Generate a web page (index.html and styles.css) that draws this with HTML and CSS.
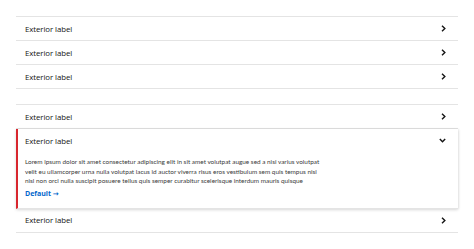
FILE: index.html
```html
<!DOCTYPE html>
<html lang="en">
<head>
<meta charset="utf-8">
<link rel="stylesheet" href="styles.css">
</head>
<body>
<div class="page">
  <div class="accordion">
    <div class="item"><span class="label">Exterior label</span><svg class="chev" viewBox="0 0 6 8"><path d="M1.2 0.8 L4.6 4 L1.2 7.2" /></svg></div>
    <div class="item"><span class="label">Exterior label</span><svg class="chev" viewBox="0 0 6 8"><path d="M1.2 0.8 L4.6 4 L1.2 7.2" /></svg></div>
    <div class="item"><span class="label">Exterior label</span><svg class="chev" viewBox="0 0 6 8"><path d="M1.2 0.8 L4.6 4 L1.2 7.2" /></svg></div>
  </div>
  <div class="accordion">
    <div class="item"><span class="label">Exterior label</span><svg class="chev" viewBox="0 0 6 8"><path d="M1.2 0.8 L4.6 4 L1.2 7.2" /></svg></div>
    <div class="panel">
      <div class="item head"><span class="label">Exterior label</span><svg class="chev down" viewBox="0 0 8 6"><path d="M0.8 1.2 L4 4.6 L7.2 1.2" /></svg></div>
      <div class="body">
        <p>Lorem ipsum dolor sit amet consectetur adipiscing elit in sit amet volutpat augue sed a nisi varius volutpat velit eu ullamcorper urna nulla volutpat lacus id auctor viverra risus eros vestibulum sem quis tempus nisi nisl non orci nulla suscipit posuere tellus quis semper curabitur scelerisque interdum mauris quisque</p>
        <a class="link" href="#">Default <span class="arrow">&rarr;</span></a>
      </div>
    </div>
    <div class="item"><span class="label">Exterior label</span><svg class="chev" viewBox="0 0 6 8"><path d="M1.2 0.8 L4.6 4 L1.2 7.2" /></svg></div>
  </div>
</div>
</body>
</html>
```

FILE: styles.css
```css
html, body {
  margin: 0;
  padding: 0;
  background: #ffffff;
}
body {
  font-family: "Open Sans", "Noto Sans", sans-serif;
  color: #151515;
}
.page {
  padding: 16px 16px 0 16px;
  display: flex;
  flex-direction: column;
  gap: 15px;
}
.accordion {
  border-top: 1px solid #e4e4e4;
  display: flex;
  flex-direction: column;
}
.item {
  height: 23px;
  border-bottom: 1px solid #e4e4e4;
  display: flex;
  align-items: center;
  justify-content: space-between;
  padding: 0 12px 0 9px;
}
.label {
  font-size: 7.9px;
  font-weight: 500;
  letter-spacing: -0.1px;
}
.chev {
  width: 5px;
  height: 7px;
  fill: none;
  stroke: #151515;
  stroke-width: 1.7;
}
.chev.down {
  width: 7px;
  height: 5px;
}
.panel {
  border-left: 2px solid #d8262e;
  border-bottom: 1px solid #e4e4e4;
  box-shadow: 0 1px 3px rgba(0,0,0,0.14), 1px 0 2px rgba(0,0,0,0.06);
  display: flex;
  flex-direction: column;
  padding-bottom: 9px;
}
.panel .head {
  border-bottom: none;
  padding-left: 7px;
}
.body {
  padding: 5px 12px 0 7px;
  display: flex;
  flex-direction: column;
  align-items: flex-start;
  gap: 3px;
}
.body p {
  margin: 0;
  max-width: 296px;
  font-family: "Lato", "Open Sans", sans-serif;
  font-size: 6.4px;
  line-height: 9.5px;
  color: #3a3a3a;
}
.link {
  display: block;
  font-size: 7px;
  line-height: 9px;
  font-weight: 700;
  color: #0066cc;
  text-decoration: none;
}
.arrow {
  font-weight: 700;
  font-family: "DejaVu Sans", sans-serif;
  font-size: 7px;
}
```
